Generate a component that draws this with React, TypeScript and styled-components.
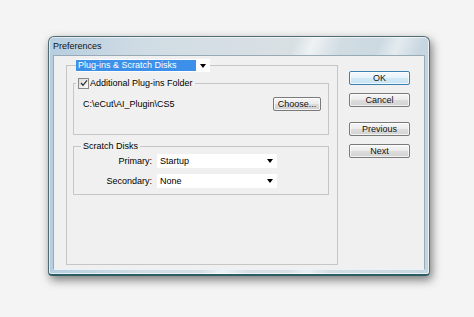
import React from 'react';
import styled, { createGlobalStyle } from 'styled-components';

const Global = createGlobalStyle`
html, body {
  margin: 0;
  padding: 0;
  background: #f4f4f4;
}
body {
  font-family: "Liberation Sans", Arial, sans-serif;
  font-size: 9px;
  color: #000;
}
`;

const Stage = styled.div`
width: 474px;
height: 317px;
padding: 36px 0 0 48px;
box-sizing: border-box;
`;

const Window = styled.div`
width: 382px;
height: 240px;
box-sizing: border-box;
display: flex;
flex-direction: column;
padding: 0 4px 4px 4px;
border: 1px solid #506c72;
border-bottom: 2px solid #2b5e62;
border-radius: 6px 6px 4px 4px;
background:
  linear-gradient(112deg, rgba(255,255,255,0) 52%, rgba(255,255,255,0.6) 56%, rgba(255,255,255,0) 62%, rgba(255,255,255,0) 70%, rgba(255,255,255,0.5) 74%, rgba(255,255,255,0) 79%),
  linear-gradient(to right, #b6cee0 0%, #d0dce4 25%, #d9e0e4 60%, #c6d6e0 100%);
box-shadow: 2px 4px 10px rgba(0, 0, 0, 0.5), inset 0 0 0 1px rgba(255,255,255,0.6);
`;

const TitleBar = styled.div`
height: 18px;
display: flex;
align-items: center;
font-size: 9px;
color: #111;
`;

const Content = styled.div`
flex: 1;
display: flex;
box-sizing: border-box;
background: #f0f0f0;
border: 1px solid #97aab6;
border-bottom-color: #e8f2f8;
padding: 3px 14px 4px 12px;
gap: 11px;
`;

const Group = styled.fieldset`
margin: 0;
min-width: 0;
border: 1px solid #c6c6c6;
padding: ${p => p.$pad};
margin-top: ${p => p.$mt || 0}px;
`;

const MainGroup = styled(Group)`
width: 272px;
box-sizing: border-box;
`;

const Legend = styled.legend`
padding: 0 2px;
margin-left: ${p => p.$ml || 0}px;
height: 12px;
line-height: 12px;
display: flex;
align-items: center;
gap: 1px;
`;

const HeaderSelect = styled.legend`
padding: 0;
margin-left: 3px;
width: 134px;
height: 13px;
display: flex;
align-items: center;
background: #fff;
`;

const Highlight = styled.span`
width: 120px;
height: 11px;
line-height: 11px;
margin-left: 0;
padding-left: 2px;
box-sizing: border-box;
background: #3d90ea;
color: #fff;
`;

const Arrow = styled.span`
margin-left: auto;
margin-right: ${p => p.$mr || 4}px;
width: 0;
height: 0;
border-left: 3px solid transparent;
border-right: 3px solid transparent;
border-top: 4px solid #000;
`;

const Check = styled.span`
width: 9px;
height: 9px;
border: 1px solid #8a8a8a;
background: linear-gradient(135deg, #dcdcdc, #fafafa);
display: flex;
align-items: center;
justify-content: center;
`;

const PathRow = styled.div`
display: flex;
align-items: center;
justify-content: space-between;
`;

const Button = styled.button`
font-family: inherit;
font-size: 9px;
color: #111;
height: 14px;
padding: 0;
width: ${p => p.$w || 61}px;
margin-top: ${p => p.$mt || 0}px;
border: 1px solid ${p => (p.$primary ? '#3c7fb1' : '#7a7a7a')};
border-radius: 2px;
background: ${p =>
  p.$primary
    ? 'linear-gradient(#f4fafe 0%, #e6f3fb 50%, #d3eaf7 50%, #c6e3f4 100%)'
    : 'linear-gradient(#f6f6f6 0%, #ebebeb 50%, #dddddd 50%, #d2d2d2 100%)'};
box-shadow: inset 0 0 0 1px rgba(255,255,255,0.7);
display: flex;
align-items: center;
justify-content: center;
line-height: 1;
`;

const DiskGrid = styled.div`
display: grid;
grid-template-columns: 69px 120px;
column-gap: 5px;
row-gap: 6px;
align-items: center;
`;

const Label = styled.span`
text-align: right;
`;

const Select = styled.div`
height: 14px;
background: #fff;
display: flex;
align-items: center;
padding-left: 3px;
`;

const Buttons = styled.div`
display: flex;
flex-direction: column;
padding-top: 12px;
`;

export default function App() {
  return (
    <Stage>
      <Global />
      <Window>
        <TitleBar>Preferences</TitleBar>
        <Content>
          <MainGroup $pad="5px 8px 0 6px">
            <HeaderSelect>
              <Highlight>Plug-ins &amp; Scratch Disks</Highlight>
              <Arrow />
            </HeaderSelect>
            <Group $pad="8px 7px 23px 9px">
              <Legend $ml={-7}>
                <Check>
                  <svg width="8" height="8" viewBox="0 0 8 8">
                    <path d="M1 4 L3 6.3 L7 1.3" fill="none" stroke="#333" strokeWidth="1.3" />
                  </svg>
                </Check>
                Additional Plug-ins Folder
              </Legend>
              <PathRow>
                <span>C:\eCut\AI_Plugin\CS5</span>
                <Button $w={48}>Choose...</Button>
              </PathRow>
            </Group>
            <Group $pad="2px 7px 6px 9px" $mt={5}>
              <Legend $ml={-2}>Scratch Disks</Legend>
              <DiskGrid>
                <Label>Primary:</Label>
                <Select>
                  Startup
                  <Arrow />
                </Select>
                <Label>Secondary:</Label>
                <Select>
                  None
                  <Arrow />
                </Select>
              </DiskGrid>
            </Group>
          </MainGroup>
          <Buttons>
            <Button $primary>OK</Button>
            <Button $mt={8}>Cancel</Button>
            <Button $mt={15}>Previous</Button>
            <Button $mt={8}>Next</Button>
          </Buttons>
        </Content>
      </Window>
    </Stage>
  );
}
